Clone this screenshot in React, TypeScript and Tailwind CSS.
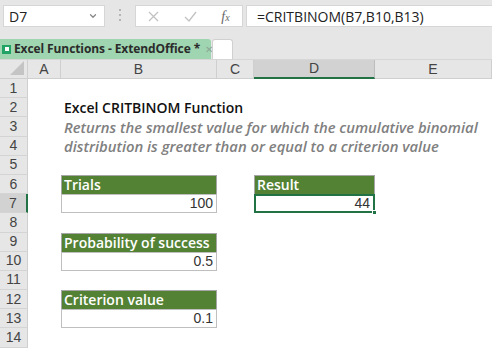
import { ChevronDown } from "lucide-react";

const cols = ["A", "B", "C", "D", "E"];
const font = { fontFamily: '"Open Sans", "Noto Sans", sans-serif' };

type Box = { label: string; value: string; col: "B" | "D" };

// row number -> what sits in it
const headers: Record<number, Box> = {
  6: { label: "Trials", value: "100", col: "B" },
  9: { label: "Probability of success", value: "0.5", col: "B" },
  12: { label: "Criterion value", value: "0.1", col: "B" },
};

function RowHeader({ n }: { n: number }) {
  const active = n === 7;
  return (
    <div
      className={`h-[19.2px] flex items-center justify-center border-b border-[#d4d4d4] text-[14px] text-[#444] ${
        active ? "bg-[#d2d2d2] border-r-2 border-r-[#217346]" : "bg-[#e6e6e6] border-r border-r-[#cfcfcf]"
      }`}
      style={{ fontFamily: '"Liberation Sans", Arial, sans-serif' }}
    >
      {n}
    </div>
  );
}

function HeadCell({ label }: { label: string }) {
  return (
    <div className="h-full bg-[#548235] border border-[#a6a6a6] border-b-0 flex items-center px-[2px] text-white text-[14px] font-semibold leading-none">
      {label}
    </div>
  );
}

function ValueCell({ value, selected }: { value: string; selected?: boolean }) {
  return (
    <div
      className={`relative h-full bg-white flex items-center justify-end pr-[3px] text-[14px] text-[#333] ${
        selected ? "border-2 border-[#217346]" : "border border-[#bfbfbf]"
      }`}
      style={{ fontFamily: '"Liberation Sans", Arial, sans-serif' }}
    >
      {value}
      {selected && <div className="absolute -right-[4px] -bottom-[4px] w-[5px] h-[5px] bg-[#217346] border border-white" />}
    </div>
  );
}

export default function App() {
  const rows = Array.from({ length: 14 }, (_, i) => i + 1);
  return (
    <div className="w-[492px] h-[352px] overflow-hidden bg-white" style={font}>
      {/* formula bar */}
      <div className="h-[40px] bg-[#e6e6e6] flex items-start pt-[5px] pl-[3px]">
        <div className="w-[102px] h-[22px] bg-white border border-[#d6d6d6] flex items-center justify-between px-[5px] text-[14px] text-[#222]">
          <span>D7</span>
          <ChevronDown size={10} strokeWidth={3} className="text-[#888] mr-[1px]" />
        </div>
        <div className="w-[30px] flex justify-center pt-[4px]">
          <div className="flex flex-col gap-[3px]">
            <span className="w-[2px] h-[2px] bg-[#b5b5b5]" />
            <span className="w-[2px] h-[2px] bg-[#b5b5b5]" />
            <span className="w-[2px] h-[2px] bg-[#b5b5b5]" />
          </div>
        </div>
        <div className="w-[108px] h-[22px] bg-white border border-[#d6d6d6] flex items-center justify-around text-[#c8c8c8]">
          <svg width="11" height="11" viewBox="0 0 11 11">
            <path d="M1 1 L10 10 M10 1 L1 10" stroke="#c2c2c2" strokeWidth="1.3" fill="none" />
          </svg>
          <svg width="13" height="11" viewBox="0 0 13 11">
            <path d="M1 6 L5 10 L12 1" stroke="#c2c2c2" strokeWidth="1.3" fill="none" />
          </svg>
          <span className="text-[14px] italic text-[#666]" style={{ fontFamily: '"Liberation Serif", serif' }}>
            f<span className="text-[10px]">x</span>
          </span>
        </div>
        <div className="flex-1 h-[22px] bg-white border-y border-l border-[#d6d6d6] ml-[3px] flex items-center pl-[10px] text-[14px] text-[#222]">
          =CRITBINOM(B7,B10,B13)
        </div>
      </div>

      {/* workbook tab */}
      <div className="h-[20px] bg-[#e6e6e6] flex items-end border-b border-[#d6d6d6]">
        <div className="w-[211px] h-[20px] bg-[#9fd5b0] rounded-tr-[3px] flex items-center pl-[2px] gap-[3px] text-[12px] font-bold text-[#2b2b2b] whitespace-nowrap">
          <div className="w-[9px] h-[9px] bg-[#21a366] flex items-center justify-center shrink-0">
            <div className="w-[4px] h-[4px] bg-white" />
          </div>
          <span className="tracking-[-0.1px]">Excel Functions - ExtendOffice *</span>
          <span className="text-[#8aa795] text-[10px] font-normal ml-[2px]">✕</span>
        </div>
        <div className="w-[21px] h-[20px] bg-white ml-[1px] rounded-t-[3px] border border-[#d0d0d0] border-b-0" />
      </div>

      {/* sheet */}
      <div className="grid grid-cols-[28px_33px_156px_37px_121px_117px]">
        <div className="h-[19px] bg-[#e6e6e6] border-r border-b border-[#cfcfcf] relative overflow-hidden">
          <div className="absolute right-[3px] bottom-[3px] w-0 h-0 border-l-[14px] border-l-transparent border-b-[14px] border-b-[#c4c4c4]" />
        </div>
        {cols.map((c) => (
          <div
            key={c}
            className={`h-[19px] flex items-center justify-center text-[14px] text-[#444] border-r ${
              c === "D"
                ? "bg-[#d2d2d2] border-b-2 border-b-[#217346] border-r-[#bdbdbd]"
                : "bg-[#e6e6e6] border-b border-b-[#cfcfcf] border-r-[#cfcfcf]"
            }`}
            style={{ fontFamily: '"Liberation Sans", Arial, sans-serif' }}
          >
            {c}
          </div>
        ))}

        {rows.map((n) => {
          const head = headers[n];
          const valueOf = headers[n - 1];
          return (
            <div key={n} className="contents">
              <RowHeader n={n} />
              <div className="h-[19.2px]" />
              {n === 2 ? (
                <div className="col-span-4 h-[19.2px] flex items-center pl-[3px] text-[14px] font-semibold text-[#111] whitespace-nowrap">
                  Excel CRITBINOM Function
                </div>
              ) : n === 3 || n === 4 ? (
                <div className="col-span-4 h-[19.2px] flex items-center pl-[3px] text-[14.8px] italic font-semibold text-[#808080] whitespace-nowrap">
                  {n === 3
                    ? "Returns the smallest value for which the cumulative binomial"
                    : "distribution is greater than or equal to a criterion value"}
                </div>
              ) : (
                <>
                  <div className="h-[19.2px]">
                    {head && <HeadCell label={head.label} />}
                    {valueOf && <ValueCell value={valueOf.value} />}
                  </div>
                  <div className="h-[19.2px]" />
                  <div className="h-[19.2px]">
                    {n === 6 && <HeadCell label="Result" />}
                    {n === 7 && <ValueCell value="44" selected />}
                  </div>
                  <div className="h-[19.2px]" />
                </>
              )}
            </div>
          );
        })}
      </div>
    </div>
  );
}
